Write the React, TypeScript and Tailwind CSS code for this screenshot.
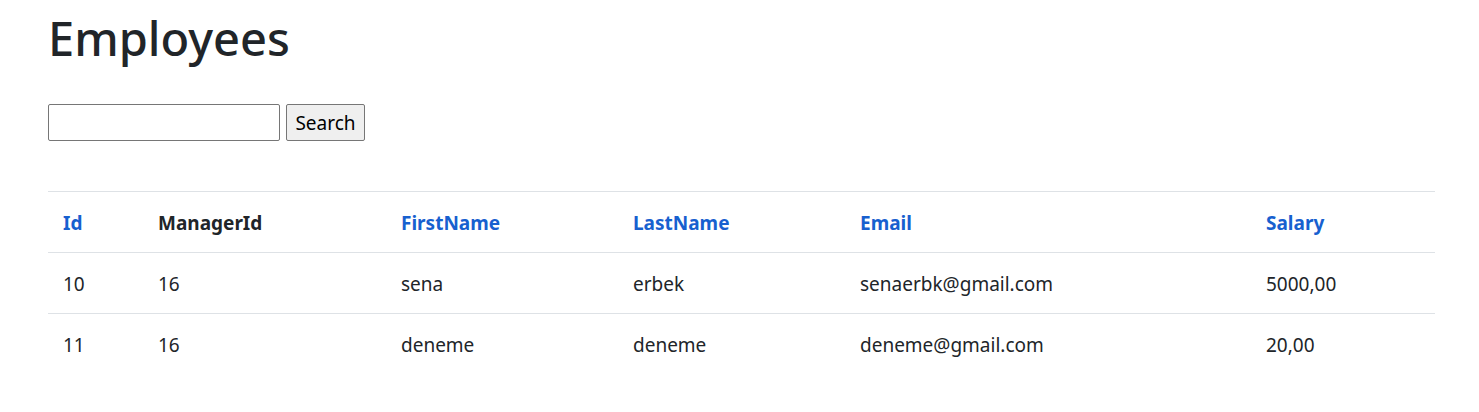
const rows = [
  { id: 10, managerId: 16, firstName: 'sena', lastName: 'erbek', email: 'senaerbk@gmail.com', salary: '5000,00' },
  { id: 11, managerId: 16, firstName: 'deneme', lastName: 'deneme', email: 'deneme@gmail.com', salary: '20,00' },
];

export default function App() {
  return (
    <div className="min-h-screen bg-white text-[#212529] text-[19px] leading-[30px] font-['Segoe_UI','Noto_Sans',sans-serif]">
      <div className="pl-[48px] w-[1435px]">
        <h1 className="pt-[8px] text-[47px] leading-[60px] font-medium mb-[36px]">Employees</h1>

        {/* formulario de búsqueda */}
        <form className="flex gap-[6px] mb-[50px]" onSubmit={(e) => e.preventDefault()}>
          <input type="text" className="w-[232px] h-[37px] border border-[#767676] rounded-[2px] px-[3px] bg-white" />
          <button type="submit" className="w-[79px] h-[37px] border border-[#767676] rounded-[2px] bg-[#efefef] text-[19px] text-black">
            Search
          </button>
        </form>

        <table className="w-full table-fixed border-collapse">
          <colgroup>
            <col className="w-[95px]" />
            <col className="w-[243px]" />
            <col className="w-[232px]" />
            <col className="w-[227px]" />
            <col className="w-[406px]" />
            <col />
          </colgroup>
          <thead>
            <tr className="border-t border-[#dee2e6] h-[61px]">
              <th className="text-left font-bold px-[15px] pt-[2px] text-[#1760cf]">Id</th>
              <th className="text-left font-bold px-[15px] pt-[2px]">ManagerId</th>
              <th className="text-left font-bold px-[15px] pt-[2px] text-[#1760cf]">FirstName</th>
              <th className="text-left font-bold px-[15px] pt-[2px] text-[#1760cf]">LastName</th>
              <th className="text-left font-bold px-[15px] pt-[2px] text-[#1760cf]">Email</th>
              <th className="text-left font-bold px-[15px] pt-[2px] text-[#1760cf]">Salary</th>
            </tr>
          </thead>
          <tbody>
            {rows.map((r) => (
              <tr key={r.id} className="border-t border-[#dee2e6] h-[61px]">
                <td className="px-[15px] pt-[2px]">{r.id}</td>
                <td className="px-[15px] pt-[2px]">{r.managerId}</td>
                <td className="px-[15px] pt-[2px]">{r.firstName}</td>
                <td className="px-[15px] pt-[2px]">{r.lastName}</td>
                <td className="px-[15px] pt-[2px]">{r.email}</td>
                <td className="px-[15px] pt-[2px]">{r.salary}</td>
              </tr>
            ))}
          </tbody>
        </table>
      </div>
    </div>
  );
}
